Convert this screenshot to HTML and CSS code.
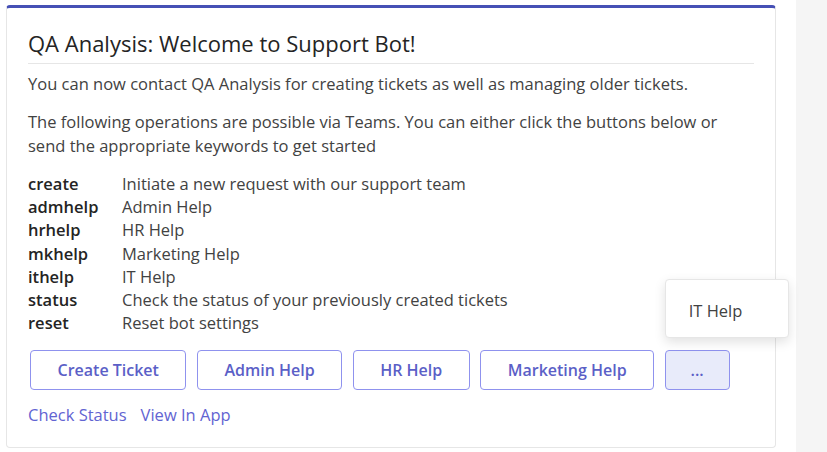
FILE: index.html
```html
<html><head><meta charset="UTF-8"><meta name="viewport" content="width=device-width, initial-scale=1.0"><title>Support Bot</title>
<link rel="stylesheet" href="styles.css">
</head>
<body>
<div class="chat">
    <div class="card">
        <h1 class="title">QA Analysis: Welcome to Support Bot!</h1>
        <p class="text intro">You can now contact QA Analysis for creating tickets as well as managing older tickets.</p>
        <p class="text">The following operations are possible via Teams. You can either click the buttons below or send the appropriate keywords to get started</p>
        <div class="commands">
            <b>create</b><span>Initiate a new request with our support team</span>
            <b>admhelp</b><span>Admin Help</span>
            <b>hrhelp</b><span>HR Help</span>
            <b>mkhelp</b><span>Marketing Help</span>
            <b>ithelp</b><span>IT Help</span>
            <b>status</b><span>Check the status of your previously created tickets</span>
            <b>reset</b><span>Reset bot settings</span>
        </div>
        <div class="actions">
            <button class="action">Create Ticket</button>
            <button class="action">Admin Help</button>
            <button class="action">HR Help</button>
            <button class="action">Marketing Help</button>
            <div class="more-wrap">
                <button class="action more">...</button>
                <div class="menu">IT Help</div>
            </div>
        </div>
        <div class="links">
            <a href="#">Check Status</a>
            <a href="#">View In App</a>
        </div>
    </div>
</div>
<div class="rail"></div>
</body></html>
```

FILE: styles.css
```css
body {
    font-family: 'Open Sans', sans-serif;
    margin: 0;
    display: flex;
    height: 452px;
    background-color: #ffffff;
    color: #424242;
    overflow: hidden;
}

.chat {
    width: 796px;
    padding: 5px 20px 0 6px;
    box-sizing: border-box;
}

.rail {
    flex: 1;
    background-color: #f5f5f5;
}

.card {
    border: 1px solid #e6e6e6;
    border-top: 3px solid #4650b5;
    border-radius: 4px;
    padding: 0 21px;
    height: 443px;
    box-sizing: border-box;
}

.title {
    font-size: 22px;
    font-weight: 400;
    color: #242424;
    margin: 0;
    padding: 21px 0 6px 0;
    line-height: 28px;
    border-bottom: 1px solid #e6e6e6;
}

.text {
    font-size: 16.5px;
    line-height: 24px;
    margin: 14px 0 0 0;
}

.text.intro {
    margin-top: 8px;
}

.commands {
    display: grid;
    grid-template-columns: 94px 1fr;
    font-size: 16.5px;
    line-height: 23.2px;
    margin-top: 14px;
}

.commands b {
    font-weight: 600;
    color: #242424;
}

.actions {
    display: flex;
    gap: 10.5px;
    margin-top: 16px;
    padding-left: 2px;
}

.action {
    font-family: 'Open Sans', sans-serif;
    font-size: 16px;
    font-weight: 600;
    color: #5b5fc7;
    background-color: #ffffff;
    border: 1px solid #8f92ee;
    border-radius: 4px;
    height: 40px;
    padding: 0 26.5px;
}

.more-wrap {
    position: relative;
}

.more {
    width: 65px;
    padding: 0;
    background-color: #e8ebfa;
}

.menu {
    position: absolute;
    left: 0;
    bottom: 52px;
    width: 124px;
    height: 59px;
    box-sizing: border-box;
    padding: 20px 0 0 23px;
    background-color: #ffffff;
    border: 1px solid #e6e6e6;
    border-radius: 4px;
    box-shadow: 0 4px 12px rgba(0, 0, 0, 0.12);
    font-size: 16.5px;
    line-height: 22px;
    color: #424242;
}

.links {
    display: flex;
    gap: 14px;
    margin-top: 14px;
}

.links a {
    font-size: 16.5px;
    line-height: 22px;
    color: #6264d2;
    text-decoration: none;
}
```
